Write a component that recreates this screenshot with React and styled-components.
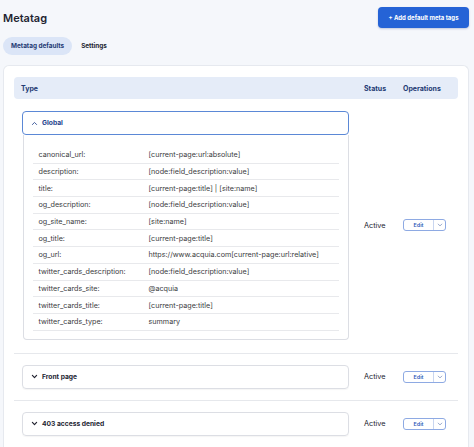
import styled, { createGlobalStyle } from 'styled-components'

const GlobalStyle = createGlobalStyle`
  html, body {
    margin: 0;
    padding: 0;
    background: #f5f7fb;
  }
  body {
    font-family: 'Inter', 'Noto Sans', sans-serif;
    color: #222330;
  }
`

const Page = styled.div`
  padding: 7px 5px 0 3px;
  min-height: 447px;
  box-sizing: border-box;
`

const TopBar = styled.div`
  display: flex;
  justify-content: space-between;
  align-items: flex-start;
`

const Title = styled.h1`
  margin: 4px 0 0;
  font-size: 11px;
  font-weight: 600;
  color: #222330;
`

const AddButton = styled.button`
  height: 21px;
  width: 91px;
  padding: 0;
  border: 0;
  border-radius: 4px;
  background: #2563d6;
  color: #fff;
  font-family: 'Inter', sans-serif;
  font-size: 6px;
  font-weight: 700;
  box-shadow: 0 1px 2px rgba(30, 60, 140, 0.25);
`

const Tabs = styled.div`
  display: flex;
  align-items: center;
  gap: 1px;
  margin-top: 9px;
`

const Tab = styled.div`
  height: 18px;
  display: flex;
  align-items: center;
  padding: 0 8px;
  border-radius: 9px;
  font-size: 6.4px;
  font-weight: 700;
  background: ${(p) => (p.active ? '#dbe5f7' : 'transparent')};
  color: ${(p) => (p.active ? '#1f3a74' : '#222330')};
`

const Panel = styled.div`
  margin-top: 10px;
  background: #fff;
  border: 1px solid #e6e9ef;
  border-bottom: 0;
  border-radius: 6px 6px 0 0;
  padding: 11px 10px 10px 10px;
`

const Table = styled.div`
  display: grid;
  grid-template-columns: 343px 39px 1fr;
`

const HeadCell = styled.div`
  height: 22px;
  display: flex;
  align-items: center;
  padding-left: 7px;
  background: #e5ecf8;
  color: #233a73;
  font-size: 7px;
  font-weight: 700;
  border-radius: ${(p) =>
    p.first ? '4px 0 0 4px' : p.last ? '0 4px 4px 0' : '0'};
`

const Cell = styled.div`
  display: flex;
  align-items: center;
  padding: ${(p) => (p.top ? 12 : 11)}px ${(p) => p.padR || 0}px
    ${(p) => (p.bottom ? 13 : 11)}px ${(p) => p.padL || 0}px;
  border-bottom: ${(p) => (p.last ? '0' : '1px solid #e6e8ec')};
  font-size: 7.3px;
  color: #222330;
`

const Card = styled.div`
  flex: 1;
  display: flex;
  flex-direction: column;
`

const CardHead = styled.div`
  height: 24px;
  box-sizing: border-box;
  display: flex;
  align-items: center;
  gap: 4px;
  padding-left: 8px;
  border: ${(p) => (p.open ? '1.5px solid #5b88d6' : '1px solid #dcdee4')};
  border-radius: 4px;
  font-size: 6.7px;
  font-weight: 700;
  color: ${(p) => (p.open ? '#23428c' : '#222330')};
  box-shadow: ${(p) => (p.open ? 'none' : '0 1px 1px rgba(0,0,0,0.04)')};
`

const CardBody = styled.div`
  border: 1px solid #dcdee4;
  border-top: 0;
  border-radius: 0 0 4px 4px;
  margin: 0 0.5px;
  padding: 12px 9px 8px 9px;
`

const TagRow = styled.div`
  display: grid;
  grid-template-columns: 110px 1fr;
  height: 16.7px;
  box-sizing: border-box;
  align-items: center;
  border-bottom: 1px solid #e8e9ec;
  font-size: 7.2px;
  color: #3a3b40;

  & > span {
    padding-left: 6px;
    white-space: nowrap;
  }
`

const Dropbutton = styled.div`
  display: flex;
  align-items: stretch;
  width: 43px;
  height: 12px;
  box-sizing: border-box;
  border: 1px solid #8eaae3;
  border-radius: 3px;
  background: #fff;
`

const DropMain = styled.div`
  flex: 1;
  display: flex;
  align-items: center;
  justify-content: center;
  font-size: 5.4px;
  font-weight: 600;
  color: #2f5bb7;
  border-right: 1px solid #c9d6f0;
`

const DropToggle = styled.div`
  width: 11px;
  display: flex;
  align-items: center;
  justify-content: center;
`

const Chevron = ({ up, color = '#222330', size = 6, w = 1.6 }) => (
  <svg width={size} height={size} viewBox="0 0 10 10">
    <path
      d={up ? 'M2 6.5 L5 3.5 L8 6.5' : 'M2 3.5 L5 6.5 L8 3.5'}
      fill="none"
      stroke={color}
      strokeWidth={w}
      strokeLinecap="round"
      strokeLinejoin="round"
    />
  </svg>
)

const globalTags = [
  ['canonical_url:', '[current-page:url:absolute]'],
  ['description:', '[node:field_description:value]'],
  ['title:', '[current-page:title] | [site:name]'],
  ['og_description:', '[node:field_description:value]'],
  ['og_site_name:', '[site:name]'],
  ['og_title:', '[current-page:title]'],
  ['og_url:', 'https://www.acquia.com[current-page:url:relative]'],
  ['twitter_cards_description:', '[node:field_description:value]'],
  ['twitter_cards_site:', '@acquia'],
  ['twitter_cards_title:', '[current-page:title]'],
  ['twitter_cards_type:', 'summary'],
]

const rows = [
  { name: 'Global', open: true },
  { name: 'Front page' },
  { name: '403 access denied' },
]

const Operations = () => (
  <Dropbutton>
    <DropMain>Edit</DropMain>
    <DropToggle>
      <Chevron color="#6f86b8" size={6} w={1.2} />
    </DropToggle>
  </Dropbutton>
)

export default function App() {
  return (
    <>
      <GlobalStyle />
      <Page>
        <TopBar>
          <Title>Metatag</Title>
          <AddButton>+ Add default meta tags</AddButton>
        </TopBar>
        <Tabs>
          <Tab active>Metatag defaults</Tab>
          <Tab>Settings</Tab>
        </Tabs>
        <Panel>
          <Table>
            <HeadCell first>Type</HeadCell>
            <HeadCell>Status</HeadCell>
            <HeadCell last>Operations</HeadCell>
            {rows.map((r, i) => {
              const last = i === rows.length - 1
              const top = i === 0
              const bottom = r.open
              return [
                <Cell key={r.name + 'a'} padL={8} padR={8} top={top} bottom={bottom} last={last}>
                  <Card>
                    <CardHead open={r.open}>
                      <Chevron up={r.open} color={r.open ? '#23428c' : '#222330'} size={7} w={r.open ? 1.2 : 1.7} />
                      {r.name}
                    </CardHead>
                    {r.open && (
                      <CardBody>
                        {globalTags.map(([k, v]) => (
                          <TagRow key={k}>
                            <span>{k}</span>
                            <span>{v}</span>
                          </TagRow>
                        ))}
                      </CardBody>
                    )}
                  </Card>
                </Cell>,
                <Cell key={r.name + 'b'} padL={7} top={top} bottom={bottom} last={last}>
                  Active
                </Cell>,
                <Cell key={r.name + 'c'} padL={7} top={top} bottom={bottom} last={last}>
                  <Operations />
                </Cell>,
              ]
            })}
          </Table>
        </Panel>
      </Page>
    </>
  )
}
